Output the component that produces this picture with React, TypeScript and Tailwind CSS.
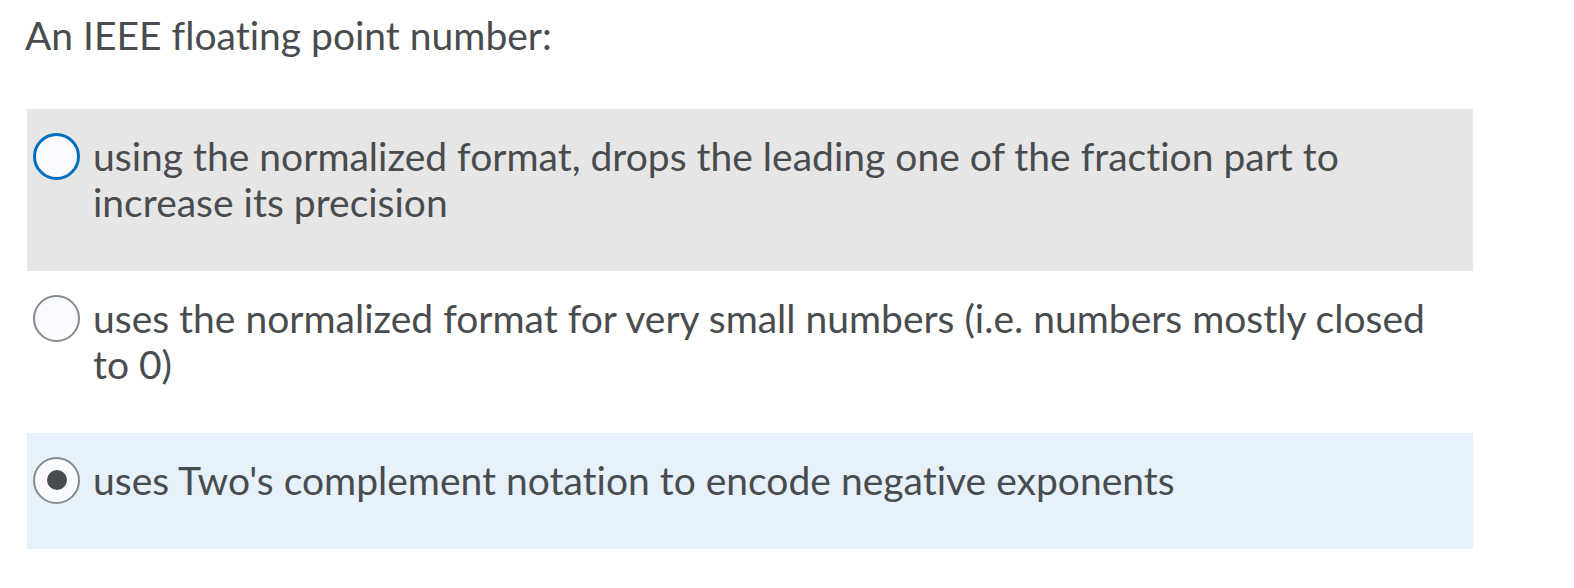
import React from "react";

type Opt = { text: string; state: "focus" | "none" | "checked"; bg: string };

const options: Opt[] = [
  {
    text: "using the normalized format, drops the leading one of the fraction part to increase its precision",
    state: "focus",
    bg: "bg-[#e6e6e6]",
  },
  {
    text: "uses the normalized format for very small numbers (i.e. numbers mostly closed to 0)",
    state: "none",
    bg: "bg-white",
  },
  {
    text: "uses Two's complement notation to encode negative exponents",
    state: "checked",
    bg: "bg-[#e7f1fb]",
  },
];

function Radio({ state }: { state: Opt["state"] }) {
  if (state === "focus") {
    return (
      <div className="w-[47px] h-[47px] shrink-0 rounded-full border-[3.5px] border-[#006fbf] bg-[#f9fbff]" />
    );
  }
  return (
    <div className="w-[47px] h-[47px] shrink-0 rounded-full border-2 border-[#868a8d] bg-[#f9fbff] flex items-center justify-center">
      {state === "checked" && <div className="w-[20px] h-[20px] rounded-full bg-[#494c4e]" />}
    </div>
  );
}

export default function App() {
  return (
    <div
      className="w-[1574px] h-[588px] bg-white text-[#494c4e] [font-variant-ligatures:none]"
      style={{ fontFamily: "Lato, 'Noto Sans', sans-serif" }}
    >
      <div className="pl-[27px] pt-[8px]">
        <div className="text-[39px] leading-[54px] -ml-[2px]">An IEEE floating point number:</div>
        <div className="mt-[47px] w-[1446px]">
          {options.map((o, i) => (
            <div key={i} className={`${o.bg} pl-[6px] pr-[20px] pt-[24px] pb-[46px] flex items-start gap-[13px]`}>
              <div className="h-[46px] flex items-center">
                <Radio state={o.state} />
              </div>
              <div className="text-[39px] leading-[46px] flex-1">{o.text}</div>
            </div>
          ))}
        </div>
      </div>
    </div>
  );
}
